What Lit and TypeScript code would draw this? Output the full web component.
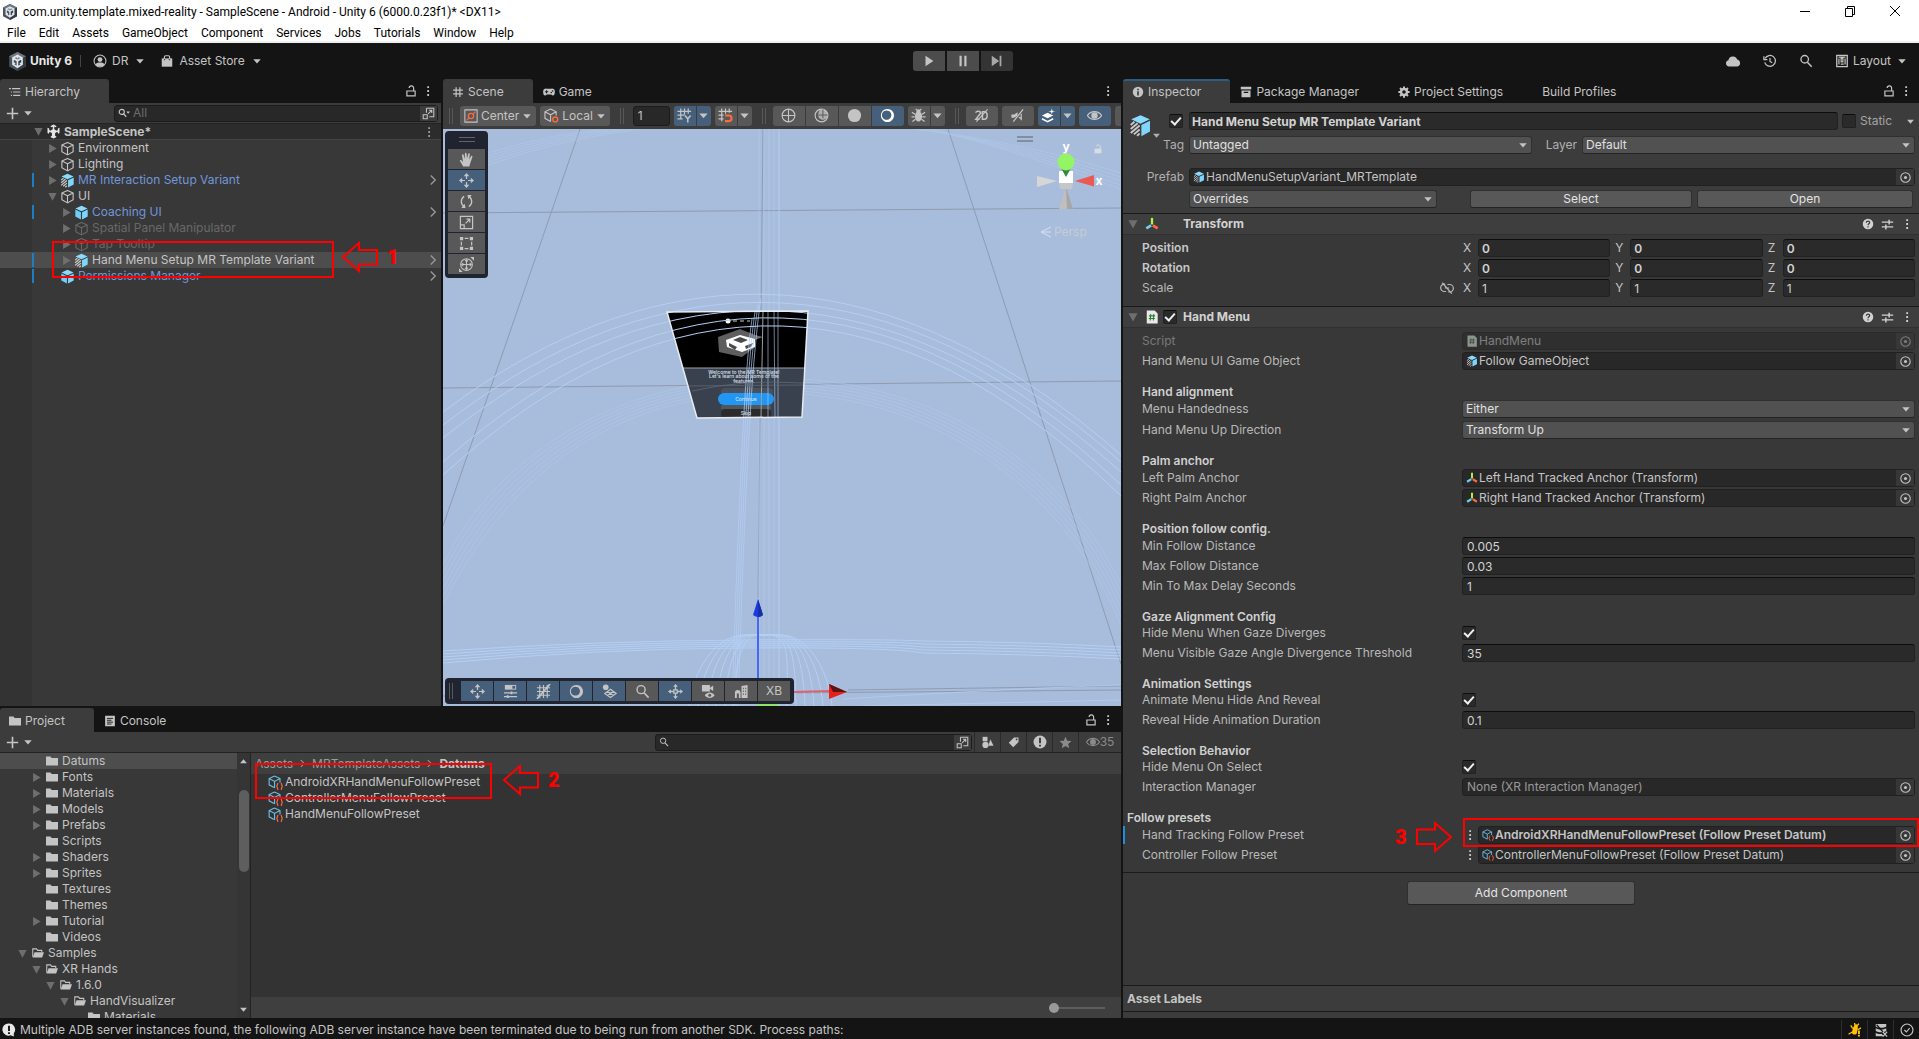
import { LitElement, html, svg, css, nothing, TemplateResult, SVGTemplateResult } from "lit";
import { customElement } from "lit/decorators.js";
import { classMap } from "lit/directives/class-map.js";
import { styleMap } from "lit/directives/style-map.js";

const cubeOutline = svg`<path d="M8 1.5 14 4.3V11.5L8 14.8 2 11.5V4.3ZM2 4.3 8 7.3 14 4.3M8 7.3V14.8" fill="none" stroke="currentColor" stroke-width="1.2" stroke-linejoin="round"/>`;
const cubeBlue = svg`<path d="M8 .8 14.4 3.7 8 6.7 1.6 3.7Z" fill="#8adcff"/><path d="M1.4 4.7 7.4 7.6V15.4L1.4 12.2Z" fill="#6fcdf8"/><path d="M14.6 4.7 8.6 7.6V15.4L14.6 12.2Z" fill="#7fd6fd"/>`;
const cubeVariant = svg`<path d="M8 .8 14.4 3.7 8 6.7 1.6 3.7Z" fill="#8adcff"/><path d="M14.6 4.7 8.6 7.6V15.4L14.6 12.2Z" fill="#7fd6fd"/><path d="M1.2 7.6 3.8 5.4M1.2 10.4 6 6.4M1.2 13.2 7.4 8M3.4 14.2 7.4 10.8M5.6 15.2 7.4 13.6" stroke="#c8c8c8" stroke-width="1.3" fill="none"/>`;
const hash = svg`<path d="M5.5 1.5V14.5M10.5 1.5V14.5M1.5 5.5H14.5M1.5 10.5H14.5" stroke="currentColor" stroke-width="1.6" fill="none"/>`;
const cross4 = svg`<path d="M8 0 11 3.4H5ZM8 16 11 12.6H5ZM0 8 3.4 5V11ZM16 8 12.6 5V11Z" fill="currentColor"/><path d="M8 3V6.4M8 9.6V13M3 8H6.4M9.6 8H13" stroke="currentColor" stroke-width="1.3"/>`;
const unityMark = (c: string) => svg`<path d="M8 .6 11.4 2.5 10 3.4 8.8 2.7V5.6L11.4 7.1 12.6 6.4V4.8L14.4 3.9V9.6L13 10.4 12.2 8.2 9.7 9.6V12.5L11 13.2V14.2L8 15.4 5 14.2V13.2L6.3 12.5V9.6L3.8 8.2 3 10.4 1.6 9.6V3.9L3.4 4.8V6.4L4.6 7.1 7.2 5.6V2.7L6 3.4 4.6 2.5Z" fill="${c}"/>`;

const ICONS: Record<string, SVGTemplateResult> = {
  unity: svg`<path d="M8 0 15 3.6V12.2L8 16 1 12.2V3.6Z" fill="#4b545e"/><path d="M8 0 15 3.6 8 7.8 1 3.6Z" fill="#6d7782"/><path d="M8 7.8 15 3.6V12.2L8 16Z" fill="#323a43"/><path d="M8 3 11.8 5V10.4L8 12.8 4.2 10.4V5ZM4.2 5 8 7.4 11.8 5M8 7.4V12.8M8 3V5.2M4.2 10.4 6 9.4M11.8 10.4 10 9.4" fill="none" stroke="#e2e6ea" stroke-width="1.4"/>`,
  scene: unityMark("#e6e6e6"),
  person: svg`<circle cx="8" cy="8" r="6.8" fill="none" stroke="currentColor" stroke-width="1.2"/><circle cx="8" cy="6.4" r="2.8" fill="currentColor"/><path d="M3 12C4 9.900 6 9.800 8 9.800S12 9.900 13 12C11.800 13.800 10 14.400 8 14.400S4.200 13.800 3 12Z" fill="currentColor"/>`,
  bag: svg`<path d="M2 5H14V14.500H2Z" fill="currentColor"/><path d="M5 7V3.600A1.500 1.500 0 0 1 6.500 2H9.500A1.500 1.500 0 0 1 11 3.600V7" fill="none" stroke="currentColor" stroke-width="1.3"/><path d="M4.500 6.500H6M10 6.500H11.500" stroke="#141414"/>`,
  down: svg`<path d="M2 5H14L8 12Z" fill="currentColor"/>`,
  right: svg`<path d="M3 1.500 14 8 3 14.500Z" fill="currentColor"/>`,
  open: svg`<path d="M2 3H14L8 14Z" fill="currentColor"/>`,
  play: svg`<path d="M4 2 13 8 4 14Z" fill="currentColor"/>`,
  pause: svg`<path d="M4 2H6.500V14H4ZM9.500 2H12V14H9.500Z" fill="currentColor"/>`,
  step: svg`<path d="M2 2 10.500 8 2 14ZM11 2H13V14H11Z" fill="currentColor"/>`,
  cloud: svg`<path d="M4 13.500A3.200 3.200 0 0 1 3.400 7.200 4.600 4.600 0 0 1 12.200 6.500 3.600 3.600 0 0 1 12.400 13.500Z" fill="currentColor"/>`,
  history: svg`<path d="M2.400 5.200A6.200 6.200 0 1 1 2 9.500" fill="none" stroke="currentColor" stroke-width="1.4"/><path d="M1 2.500V6.500H5" fill="none" stroke="currentColor" stroke-width="1.4"/><path d="M8 4.500V8.500L10.500 10" fill="none" stroke="currentColor" stroke-width="1.4"/>`,
  search: svg`<circle cx="6.500" cy="6" r="4.300" fill="none" stroke="currentColor" stroke-width="1.500"/><path d="M9.600 9.300 14.500 14.500" stroke="currentColor" stroke-width="1.700"/>`,
  searchDrop: svg`<circle cx="5" cy="6.500" r="3.400" fill="none" stroke="currentColor" stroke-width="1.500"/><path d="M7.400 9 11 13" stroke="currentColor" stroke-width="1.600"/><path d="M11 6H16L13.500 9Z" fill="currentColor"/>`,
  layout: svg`<path d="M2 1.500H14V14.500H2Z" fill="none" stroke="currentColor" stroke-width="1.500"/><path d="M4.500 5V12M7 5V9H9V5ZM11.500 5V12M6.500 11.500H10M4 3.500H12" fill="none" stroke="currentColor" stroke-width="1.400"/>`,
  list: svg`<path d="M4 3.500H15M5.500 8H15M5.500 12.500H15" stroke="currentColor" stroke-width="1.500"/><path d="M0 3.500H2.500M2.500 8H4M2.500 12.500H4" stroke="currentColor" stroke-width="1.500"/>`,
  hash,
  gamepad: svg`<path d="M4.500 3.500H11.500A4.300 4.300 0 0 1 15.800 8C15.800 13.500 12.500 13.500 11 11.200H5C3.500 13.500 .2 13.500 .2 8A4.300 4.300 0 0 1 4.500 3.500Z" fill="currentColor"/><path d="M4.800 5.500V9.900M2.600 7.700H7" stroke="#141414" stroke-width="1.200"/><circle cx="11" cy="8.600" r="1" fill="#141414"/><circle cx="12.800" cy="6.600" r="1" fill="#141414"/>`,
  info: svg`<circle cx="8" cy="8" r="7" fill="currentColor"/><path d="M8 3.500V5.500M8 7V12.500" stroke="#2c2c2c" stroke-width="2"/>`,
  pkg: svg`<path d="M1 1H15V4.500H1Z" fill="currentColor"/><path d="M2 6H14V15H2Z" fill="currentColor"/><path d="M5 8.500H11" stroke="#141414" stroke-width="1.600"/>`,
  gear: svg`<circle cx="8" cy="8" r="4" fill="none" stroke="currentColor" stroke-width="3.200"/><path d="M8 .5V4M8 12V15.500M.5 8H4M12 8H15.500M2.700 2.700 5 5M11 11 13.300 13.300M13.300 2.700 11 5M5 11 2.700 13.300" stroke="currentColor" stroke-width="2.600"/>`,
  lock: svg`<path d="M2.500 8H13.500V14.500H2.500Z" fill="none" stroke="currentColor" stroke-width="1.600"/><path d="M11.500 8V4.500A2.800 2.800 0 0 0 5.500 4" fill="none" stroke="currentColor" stroke-width="1.600"/>`,
  lockSolid: svg`<path d="M2.500 7.500H13.500V15H2.500Z" fill="currentColor"/><path d="M11.500 8V4.500A2.800 2.800 0 0 0 5.500 4" fill="none" stroke="currentColor" stroke-width="1.600"/>`,
  kebab: svg`<path d="M7 1.500H9.400V4H7ZM7 6.800H9.400V9.300H7ZM7 12H9.400V14.500H7Z" fill="currentColor"/>`,
  plus: svg`<path d="M8 1V15M1 8H15" stroke="currentColor" stroke-width="2"/>`,
  popout: svg`<path d="M5.500 1.500H14.500V12H9M5.500 1.500V7" fill="none" stroke="currentColor" stroke-width="1.300"/><path d="M1.500 9.500H6.500V14.500H1.500Z" fill="none" stroke="currentColor" stroke-width="1.300"/><path d="M7.500 8.500 12 4M8.500 4H12V7.500" fill="none" stroke="currentColor" stroke-width="1.300"/>`,
  cubeOutline, cubeBlue, cubeVariant,
  chev: svg`<path d="M5 2 11 8 5 14" fill="none" stroke="currentColor" stroke-width="1.800"/>`,
  folder: svg`<path d="M0 2H6L7.500 4H16V14H0Z" fill="currentColor"/>`,
  folderOpen: svg`<path d="M1 13V2.500H6L7.500 4.500H13V7" fill="none" stroke="currentColor" stroke-width="1.400"/><path d="M3.500 7H16L13.500 14H0.800Z" fill="currentColor"/>`,
  console: svg`<path d="M1.500 1H14.500V15H1.500Z" fill="currentColor"/><path d="M4 4.500H12M4 7H10M4 9.500H12M4 12H10" stroke="#141414" stroke-width="1.200"/>`,
  datum: svg`<path d="M7 1 12.800 3.800V8M7 1 1.200 3.800V10.500L7 13.500M1.200 3.800 7 6.800 12.800 3.800M7 6.800V13.500" fill="none" stroke="#6cbde3" stroke-width="1.200"/><path d="M11 8.700C9.600 8.700 10.500 11.800 9 12.100 10.500 12.400 9.600 15.500 11 15.500M13.600 8.700C15 8.700 14.100 11.800 15.600 12.100 14.100 12.400 15 15.500 13.600 15.500" fill="none" stroke="#ff6b3d" stroke-width="1.300"/>`,
  center: svg`<path d="M1 1H15V15H1Z" fill="none" stroke="currentColor" stroke-width="1.200"/><circle cx="8" cy="8" r="3" fill="none" stroke="#ff6b3d" stroke-width="1.500"/><path d="M3 13 5.500 10.500M10.500 5.500 13 3" stroke="#ff6b3d" stroke-width="1.300"/>`,
  local: svg`<path d="M7 1 13 4V8M7 1 1 4V11L7 14.500M1 4 7 7.200 13 4M7 7.200V14.500" fill="none" stroke="currentColor" stroke-width="1.200"/><circle cx="12" cy="12.200" r="2.600" fill="none" stroke="#ff6b3d" stroke-width="1.500"/>`,
  gridY: svg`<path d="M4 .5V12M8 .5V7M12 .5V6M.5 3.500H15M.5 7.500H8M.5 11.500H6" stroke="currentColor" stroke-width="1.300"/><path d="M8.500 8 11.500 11.500 14.500 8M11.500 11.500V15.500" fill="none" stroke="currentColor" stroke-width="1.600"/>`,
  snap: svg`<path d="M4 .5V14M8 .5V6M12 .5V5M.5 3.500H15M.5 7.500H6M.5 11.500H6" stroke="currentColor" stroke-width="1.300"/><path d="M7.500 8H11.500A2.700 2.700 0 0 1 11.500 14H7.500" fill="none" stroke="#ff6b3d" stroke-width="2.200"/>`,
  globe: svg`<circle cx="8" cy="8" r="6.800" fill="none" stroke="currentColor" stroke-width="1.200"/><path d="M8 1V15M1 8H15" stroke="currentColor" stroke-width="1.200"/>`,
  shaded: svg`<circle cx="8" cy="8" r="6.800" fill="none" stroke="currentColor" stroke-width="1.200"/><path d="M6.500 1.200A6.800 6.800 0 0 1 14.500 9.500 5.500 5.500 0 0 1 5 10 10 10 0 0 1 6.500 1.200Z" fill="currentColor" opacity=".8"/><path d="M9.500 1.500V11M5 7.500H14.500" stroke="#585858"/>`,
  ball: svg`<circle cx="8" cy="8" r="7" fill="currentColor"/>`,
  moon: svg`<path d="M8 1A7 7 0 1 1 7.900 1ZM7 2.600A5 5 0 1 0 7.100 2.600Z" fill="#fff" fill-rule="evenodd"/>`,
  bug: svg`<ellipse cx="8" cy="9" rx="3.800" ry="5.500" fill="currentColor"/><circle cx="8" cy="3.600" r="2.200" fill="currentColor"/><path d="M5 1 6.500 2.500M11 1 9.500 2.500M1 4.500 4.500 7M15 4.500 11.500 7M.5 9.500H4M15.500 9.500H12M1.500 14.500 4.800 12M14.500 14.500 11.200 12" stroke="currentColor" stroke-width="1.300"/>`,
  twoD: svg`<path d="M2 5C2 3 7 3 7 5.500L2 12H6M9 4H11C15 4 15 12 11 12H9Z" fill="none" stroke="currentColor" stroke-width="1.600"/><path d="M14.500 1.500 2.500 14.500" stroke="currentColor" stroke-width="1.200"/>`,
  mute: svg`<path d="M1.500 7H4.500L8 4.500V8L4.500 10.500H1.500Z" fill="currentColor"/><path d="M14 1.500 3.500 14.500M12 6V12L9.500 9.500" fill="none" stroke="currentColor" stroke-width="1.300"/>`,
  fx: svg`<path d="M1 8 7 5 13 8 7 11Z" fill="#fff"/><path d="M1 11.500 7 14.500 13 11.500" fill="none" stroke="#fff" stroke-width="1.600"/><path d="M11.500 0 12.400 2.800 15.500 3.700 12.400 4.600 11.500 7.500 10.600 4.600 7.500 3.700 10.600 2.800Z" fill="#fff" stroke="#46607c" stroke-width=".5"/>`,
  eye: svg`<path d="M.5 8C4 2.500 12 2.500 15.500 8 12 13.500 4 13.500 .5 8Z" fill="none" stroke="currentColor" stroke-width="1.300"/><circle cx="8" cy="8" r="3.400" fill="currentColor"/>`,
  hand: svg`<path d="M4.500 15.500 1 9.500C.6 8.600 1.800 8 2.500 8.800L4.300 10.700 3.200 3.500C3 2.400 4.600 2.100 4.900 3.200L6.200 7.500 6.300 1.600C6.300.4 8 .4 8.100 1.600L8.500 7.300 9.800 2.100C10 1 11.600 1.300 11.500 2.500L10.900 8 12.800 4.500C13.300 3.600 14.700 4.100 14.300 5.200L11.800 12.500 11 15.500Z" fill="currentColor"/>`,
  cross4,
  rotate: svg`<path d="M5.500 13.500A6.500 6.500 0 0 1 5.500 2.500M10.500 2.500A6.500 6.500 0 0 1 10.500 13.500" fill="none" stroke="currentColor" stroke-width="1.400"/><path d="M9 1H13.500L10 5.500ZM7 15H2.500L6 10.500Z" fill="currentColor"/>`,
  scale: svg`<path d="M1.500 1.500H14.500V14.500H1.500ZM1.500 10.500H5.500V14.500" fill="none" stroke="currentColor" stroke-width="1.300"/><path d="M7 9 11.500 4.500M8 4.500H11.500V8" fill="none" stroke="currentColor" stroke-width="1.300"/>`,
  rect: svg`<path d="M1 1H4.500V4.500H1ZM11.500 1H15V4.500H11.500ZM1 11.500H4.500V15H1ZM11.500 11.500H15V15H11.500Z" fill="currentColor"/><path d="M6 2.500H10M6 13.500H10M2.500 6V10M13.500 6V10" stroke="currentColor" stroke-width="1.300"/>`,
  multi: svg`<circle cx="8" cy="8" r="6.200" fill="none" stroke="currentColor" stroke-width="1.200"/><path d="M8 3V13M3 8H13M6.500 4.500 8 3 9.500 4.500M6.500 11.500 8 13 9.500 11.500M4.500 6.500 3 8 4.500 9.500M11.500 6.500 13 8 11.500 9.500" fill="none" stroke="currentColor" stroke-width="1.200"/><path d="M12 0H16V4ZM0 12V16H4Z" fill="currentColor"/>`,
  panelSliders: svg`<path d="M2 1H14V6H2Z" fill="currentColor"/><path d="M10 2H13V5H10Z" fill="#46607c"/><path d="M1 9.500H15M1 13.500H15" stroke="currentColor" stroke-width="1.300"/><path d="M9 8V11M5 12V15" stroke="currentColor" stroke-width="2"/>`,
  gridSlash: svg`<path d="M4 1V15M8 1V15M12 1V15M1 4H15M1 8H15M1 12H15" stroke="currentColor" stroke-width="1.200"/><path d="M15 0 1 16" stroke="currentColor" stroke-width="1.800"/>`,
  lightProbe: svg`<path d="M8 1A7 7 0 1 1 7.900 1ZM6.800 2.800A4.800 4.800 0 1 0 6.900 2.800Z" fill="currentColor" fill-rule="evenodd"/>`,
  ballGrid: svg`<circle cx="4" cy="3.500" r="3" fill="currentColor"/><path d="M9 5.500 15 10 9 14.500 3 10ZM6 7.700 12 12.200M12 7.700 6 12.200" fill="none" stroke="currentColor" stroke-width="1.300"/>`,
  nav: svg`<path d="M8 0 10.500 3H5.500ZM8 16 10.500 13H5.500ZM0 8 3 5.500V10.500ZM16 8 13 5.500V10.500Z" fill="currentColor"/><path d="M8 2V6M8 10V14M2 8H6M10 8H14M6.200 6.200H9.800V9.800H6.200Z" fill="none" stroke="currentColor" stroke-width="1.400"/>`,
  camEye: svg`<path d="M1 1H9.500V8H1ZM9.500 4 13 1.500V7.500L9.500 5Z" fill="currentColor"/><path d="M4 12C7 8.200 11.500 8.200 14.500 12 11.500 15.800 7 15.800 4 12Z" fill="currentColor"/><circle cx="9.300" cy="12" r="1.600" fill="#585858"/>`,
  city: svg`<path d="M1 15V9C1 5.500 7 5.500 7 9V15H5.200V10H3V15ZM8 15V2L14.500 1V15Z" fill="currentColor"/><path d="M10 4V13M12.500 4V13" stroke="#585858" stroke-dasharray="1.500 1.500"/>`,
  help: svg`<circle cx="8" cy="8" r="7" fill="currentColor"/><path d="M5.800 6.200C5.800 3.400 10.400 3.600 10.200 6.200 10.100 7.800 8 7.800 8 9.600M8 11V12.800" fill="none" stroke="#3a3a3a" stroke-width="1.600"/>`,
  preset: svg`<path d="M1 5H15M1 11H15" stroke="currentColor" stroke-width="1.400"/><path d="M10 2V8M6 8V14" stroke="currentColor" stroke-width="1.800"/>`,
  transform: svg`<path d="M8 1V8.500" stroke="#b6f24a" stroke-width="2.600"/><path d="M7 9.500 1.500 13" stroke="#6fcdf8" stroke-width="3"/><path d="M9 9.500 14.500 13" stroke="#ff6b3d" stroke-width="3"/>`,
  script: svg`<path d="M2 .5H11L14.500 4V15.500H2Z" fill="#e9e9e9"/><path d="M6.500 4.500 6 12M10 4.500 9.500 12M4.500 6.700H11.500M4.300 9.700H11.300" stroke="#2e7d32" stroke-width="1.200"/>`,
  target: svg`<circle cx="8" cy="8" r="5.800" fill="none" stroke="currentColor" stroke-width="1.300"/><circle cx="8" cy="8" r="1.900" fill="currentColor"/>`,
  link: svg`<path d="M6 3.500H5A4 4 0 0 0 5 12H7M9.500 12.500H11A4 4 0 0 0 11 4H8.500M5.500 8H10.500M2.500 2 13.500 14.500" fill="none" stroke="currentColor" stroke-width="1.400"/>`,
  shapes: svg`<path d="M2 1H8V6.500H2Z" fill="currentColor"/><circle cx="5.500" cy="11" r="3.800" fill="currentColor"/><path d="M11.500 4 15.500 12H9Z" fill="currentColor"/>`,
  tag: svg`<path d="M8 2H14V8L7 15 1 9Z" fill="currentColor"/><circle cx="11.500" cy="4.500" r="1.200" fill="#3c3c3c"/>`,
  alert: svg`<circle cx="8" cy="8" r="7.400" fill="currentColor"/><path d="M8 3V9.500M8 11.200V13.200" stroke="#3c3c3c" stroke-width="2.200"/>`,
  star: svg`<path d="M8 1 10.100 5.900 15.400 6.300 11.300 9.800 12.600 15 8 12.200 3.400 15 4.700 9.800 .6 6.300 5.900 5.900Z" fill="currentColor"/>`,
  bubble: svg`<path d="M8 .5A7 7 0 0 1 13.500 11.800L13.500 15.500 10 14A7 7 0 1 1 8 .5Z" fill="#e8e8e8"/><path d="M8 3V9M8 10.500V12.500" stroke="#141414" stroke-width="2.200"/>`,
  bugWarn: svg`<g transform="rotate(14 8 8)"><path d="M5.200 6C5.200 3 10.800 3 10.800 6V11C10.800 14 5.200 14 5.200 11Z" fill="#ffc107"/><circle cx="8" cy="3.500" r="2.300" fill="#ffc107"/><path d="M5.500 0 6.500 2.500M10.500 0 9.500 2.500M2 4 5 7M14 4 11 7M2 14.500 5.500 11" stroke="#ffc107" stroke-width="1.500"/></g><path d="M12.500 8.500V12.500M12.500 13.500V15.500" stroke="#ffc107" stroke-width="2.200"/>`,
  layersOff: svg`<path d="M2 1H14V4C12 6 4 6 2 4ZM2 6C5 8 11 8 14 6V9C11 11 5 11 2 9ZM2 11C4 12.500 7 13 9 12.500L11 15H2Z" fill="currentColor"/><path d="M3 2 14.500 15" stroke="#141414" stroke-width="1.400"/><path d="M10 10 15 15.500M15 10 10 15.500" stroke="currentColor" stroke-width="1.300"/>`,
  okCircle: svg`<circle cx="8" cy="8" r="6.800" fill="none" stroke="currentColor" stroke-width="1.300"/><path d="M5 8 7.300 10.300 11 5.800" fill="none" stroke="currentColor" stroke-width="1.300"/>`,
  min: svg`<path d="M3 8.500H13" stroke="currentColor"/>`,
  restore: svg`<path d="M3.500 5.500H10.500V13.500H3.500ZM5.500 5.500V3.500H12.500V11.500H10.500" fill="none" stroke="currentColor"/>`,
  close: svg`<path d="M3 3 13 13M13 3 3 13" stroke="currentColor"/>`,
};

const icon = (name: string, size = 12, cls = "") =>
  html`<svg class="ic ${cls}" width=${size} height=${size} viewBox="0 0 16 16" aria-hidden="true">${ICONS[name]}</svg>`;

interface Node { t: string; d: number; a?: "open" | "right"; ic: string; k?: string; mod?: boolean; go?: boolean }

const HIERARCHY: Node[] = [
  { t: "Environment", d: 1, a: "right", ic: "cubeOutline" },
  { t: "Lighting", d: 1, a: "right", ic: "cubeOutline" },
  { t: "MR Interaction Setup Variant", d: 1, a: "right", ic: "cubeVariant", k: "prefab", mod: true, go: true },
  { t: "UI", d: 1, a: "open", ic: "cubeOutline" },
  { t: "Coaching UI", d: 2, a: "right", ic: "cubeBlue", k: "prefab", mod: true, go: true },
  { t: "Spatial Panel Manipulator", d: 2, a: "right", ic: "cubeOutline", k: "off" },
  { t: "Tap Tooltip", d: 2, a: "right", ic: "cubeOutline", k: "off" },
  { t: "Hand Menu Setup MR Template Variant", d: 2, a: "right", ic: "cubeVariant", k: "picked", mod: true, go: true },
  { t: "Permissions Manager", d: 1, ic: "cubeBlue", k: "prefab", mod: true, go: true },
];

const FOLDERS: Node[] = [
  { t: "Datums", d: 1, ic: "folder", k: "picked" },
  { t: "Fonts", d: 1, a: "right", ic: "folder" },
  { t: "Materials", d: 1, a: "right", ic: "folder" },
  { t: "Models", d: 1, a: "right", ic: "folder" },
  { t: "Prefabs", d: 1, a: "right", ic: "folder" },
  { t: "Scripts", d: 1, ic: "folder" },
  { t: "Shaders", d: 1, a: "right", ic: "folder" },
  { t: "Sprites", d: 1, a: "right", ic: "folder" },
  { t: "Textures", d: 1, ic: "folder" },
  { t: "Themes", d: 1, ic: "folder" },
  { t: "Tutorial", d: 1, a: "right", ic: "folder" },
  { t: "Videos", d: 1, ic: "folder" },
  { t: "Samples", d: 0, a: "open", ic: "folderOpen" },
  { t: "XR Hands", d: 1, a: "open", ic: "folderOpen" },
  { t: "1.6.0", d: 2, a: "open", ic: "folderOpen" },
  { t: "HandVisualizer", d: 3, a: "open", ic: "folderOpen" },
  { t: "Materials", d: 4, ic: "folder" },
];

type Prop =
  | { kind: "head"; t: string; out?: boolean }
  | { kind: "obj"; t: string; v: string; ic?: string; off?: boolean; none?: boolean; mod?: boolean; menu?: boolean }
  | { kind: "sel"; t: string; v: string }
  | { kind: "num"; t: string; v: string }
  | { kind: "chk"; t: string };

const PROPS: Prop[] = [
  { kind: "obj", t: "Script", v: "HandMenu", ic: "script", off: true },
  { kind: "obj", t: "Hand Menu UI Game Object", v: "Follow GameObject", ic: "cubeVariant" },
  { kind: "head", t: "Hand alignment" },
  { kind: "sel", t: "Menu Handedness", v: "Either" },
  { kind: "sel", t: "Hand Menu Up Direction", v: "Transform Up" },
  { kind: "head", t: "Palm anchor" },
  { kind: "obj", t: "Left Palm Anchor", v: "Left Hand Tracked Anchor (Transform)", ic: "transform" },
  { kind: "obj", t: "Right Palm Anchor", v: "Right Hand Tracked Anchor (Transform)", ic: "transform" },
  { kind: "head", t: "Position follow config." },
  { kind: "num", t: "Min Follow Distance", v: "0.005" },
  { kind: "num", t: "Max Follow Distance", v: "0.03" },
  { kind: "num", t: "Min To Max Delay Seconds", v: "1" },
  { kind: "head", t: "Gaze Alignment Config" },
  { kind: "chk", t: "Hide Menu When Gaze Diverges" },
  { kind: "num", t: "Menu Visible Gaze Angle Divergence Threshold", v: "35" },
  { kind: "head", t: "Animation Settings" },
  { kind: "chk", t: "Animate Menu Hide And Reveal" },
  { kind: "num", t: "Reveal Hide Animation Duration", v: "0.1" },
  { kind: "head", t: "Selection Behavior" },
  { kind: "chk", t: "Hide Menu On Select" },
  { kind: "obj", t: "Interaction Manager", v: "None (XR Interaction Manager)", none: true },
  { kind: "head", t: "Follow presets", out: true },
  { kind: "obj", t: "Hand Tracking Follow Preset", v: "AndroidXRHandMenuFollowPreset (Follow Preset Datum)", ic: "datum", mod: true, menu: true },
  { kind: "obj", t: "Controller Follow Preset", v: "ControllerMenuFollowPreset (Follow Preset Datum)", ic: "datum", menu: true },
];

@customElement("app-root")
export class AppRoot extends LitElement {
  static styles = css`
    :host { display: block; height: 100vh; font: 12px/16px Inter, "Liberation Sans", sans-serif; color: #c4c4c4; }
    * { box-sizing: border-box; }
    .ic { flex: none; display: block; }
    button, input, select { font: inherit; color: inherit; margin: 0; padding: 0; border: 0; background: none; border-radius: 0; outline: none; min-width: 0; }
    button { display: flex; align-items: center; justify-content: center; }
    a { color: inherit; text-decoration: none; }
    .app { display: flex; flex-direction: column; height: 100%; background: #141414; overflow: hidden; }
    .os { background: #fff; color: #000; font-family: Roboto, "Noto Sans", sans-serif; border-bottom: 2px solid #f0f0f0; }
    .title { display: flex; align-items: center; height: 24px; padding: 0 16px 0 2px; gap: 5px; }
    .title .name { flex: 1; }
    .wins { display: flex; gap: 29px; padding-bottom: 3px; }
    .menu { display: flex; height: 17px; padding: 1px 7px 0; gap: 13px; }
    .top { display: grid; grid-template-columns: 1fr auto 1fr; align-items: center; height: 36px; flex: none; padding: 0 12px 0 8px; }
    .row { display: flex; align-items: center; }
    .brand { font-weight: 700; color: #e8e8e8; margin: 0 8px 0 3px; }
    .account { margin-left: 12px; padding-left: 0; gap: 5px; }
    .sep { width: 1px; height: 12px; background: #444; }
    .store { margin-left: 15px; gap: 5px; }
    .drop { margin-left: 2px; }
    .plays { display: flex; gap: 2px; margin-left: 10px; }
    .plays button { width: 32px; height: 20px; background: #4c4c4c; }
    .plays button:first-child { border-radius: 3px 0 0 3px; }
    .plays button:last-child { border-radius: 0 3px 3px 0; background: #343434; color: #a8a8a8; }
    .tools { justify-content: flex-end; gap: 22px; }
    .tools .lay { gap: 4px; }
    .main { flex: 1; min-height: 0; display: grid; grid-template-columns: minmax(0, 1121fr) minmax(0, 796fr); gap: 2px; }
    .left { display: grid; min-height: 0; grid-template-rows: minmax(0, 627fr) minmax(0, 310fr); gap: 2px; }
    .upper { display: grid; min-height: 0; grid-template-columns: minmax(0, 441fr) minmax(0, 678fr); gap: 2px; }
    .panel { display: flex; flex-direction: column; min-height: 0; min-width: 0; position: relative; }
    .tabs { display: flex; height: 24px; flex: none; gap: 1px; }
    .tab { padding: 0 29px 0 9px; gap: 4px; border-radius: 3px 3px 0 0; border-top: 2px solid transparent; white-space: nowrap; }
    .tab.on { background: #3c3c3c; }
    .tab.focus { border-top-color: #2c5d87; }
    .tabEnd { margin-left: auto; display: flex; align-items: center; gap: 5px; padding-right: 7px; }
    .bar { display: flex; align-items: center; background: #3c3c3c; flex: none; }
    .hbar { height: 21px; border-bottom: 1px solid #232323; padding: 0 3px 0 6px; }
    .add { gap: 4px; }
    .search { display: flex; align-items: center; height: 17px; background: #282828; border: 1px solid #1c1c1c; border-radius: 3px; padding-left: 3px; gap: 3px; }
    .search input { flex: 1; height: 15px; }
    .search input::placeholder { color: #6e6e6e; opacity: 1; }
    .search button { width: 17px; height: 15px; background: #3c3c3c; }
    .hbar .search { margin-left: auto; width: 75%; }
    .hbody { flex: 1; min-height: 0; background: linear-gradient(90deg, #333 32px, #383838 32px); }
    .node { display: flex; align-items: center; height: 16px; position: relative; white-space: nowrap; }
    .node .arrow { width: 16px; display: flex; justify-content: center; color: #6e6e6e; flex: none; }
    .node .label { margin-left: 3px; }
    .node .go { margin-left: auto; margin-right: 2px; color: #999; }
    .node.prefab { color: #7196d8; }
    .node.off { color: #686868; }
    .node.picked { background: #4d4d4d; }
    .node.mod::before { content: ""; position: absolute; left: 32px; top: 1px; width: 2px; height: 14px; background: #1c7fc4; }
    .sceneRow { background: #2c2c2c; border-bottom: 1px solid #444; font-weight: 700; padding-left: 30px; padding-right: 4px; }
    .sbar { height: 26px; padding: 0 0 1px 6px; overflow: hidden; }
    .grip { width: 4px; height: 16px; border: 1px solid #585858; border-width: 0 1px; flex: none; }
    .tb { height: 20px; background: #585858; border-radius: 3px; flex: none; }
    .tb.w33 { width: 32px; }
    .tb.w23 { width: 22px; }
    .tb.w14 { width: 14px; }
    .tb.blue { background: #46607c; }
    .grp { display: flex; gap: 1px; margin-left: 4px; }
    .grp .tb { border-radius: 0; }
    .grp .tb:first-child { border-radius: 3px 0 0 3px; }
    .grp .tb:last-child { border-radius: 0 3px 3px 0; }
    .grp .tb:only-child { border-radius: 3px; }
    .pivot { padding: 0 4px; gap: 3px; margin-left: 4px; }
    .grip + .pivot, .grip + .grp { margin-left: 7px; }
    .gripGap { margin-left: 10px; }
    .snapv { width: 37px; height: 20px; background: #282828; border: 1px solid #1c1c1c; border-radius: 3px; padding-left: 4px; margin-left: 9px; flex: none; }
    .view { flex: 1; min-height: 0; position: relative; background: #a8bcdb; overflow: hidden; }
    .draw { display: block; width: 100%; height: 100%; }
    .vtools { position: absolute; left: 2px; top: 2px; width: 43px; background: #202430; border-radius: 4px; padding: 0 3px 4px; display: flex; flex-direction: column; gap: 1px; align-items: stretch; }
    .vgrip { width: 16px; height: 5px; border: 1px solid #626262; border-width: 1px 0; margin: 6px auto; }
    .vtools .tb, .htools .tb { border-radius: 0; }
    .htools { position: absolute; left: 2px; bottom: 2px; height: 26px; background: #202430; border-radius: 4px; padding: 0 4px 0 4px; display: flex; align-items: center; gap: 1px; }
    .htools .grip { margin-right: 7px; }
    .pbar { height: 21px; border-bottom: 1px solid #232323; padding-left: 6px; }
    .pbar .search { margin-left: auto; width: 317px; }
    .pf { width: 26px; height: 20px; border-left: 1px solid #2a2a2a; }
    .pf:first-of-type { margin-left: 2px; }
    .dim { color: #8a8a8a; }
    .count { width: 43px; }
    .pbody { flex: 1; min-height: 0; display: grid; grid-template-columns: 251fr 870fr; }
    .folders { display: flex; background: #383838; min-height: 0; overflow: hidden; border-right: 1px solid #232323; }
    .ftree { flex: 1; overflow: hidden; }
    .ftree .arrow { margin-right: 2px; }
    .ftree .label { margin-left: 4px; }
    .sb { width: 13px; background: #353535; display: flex; flex-direction: column; align-items: center; padding: 4px 0; }
    .thumb { width: 10px; height: 32%; border-radius: 5px; background: #5e5e5e; margin-top: 24px; }
    .sb .ic:last-child { margin-top: auto; }
    .flip { transform: rotate(180deg); }
    .assets { display: flex; flex-direction: column; background: #333; min-width: 0; }
    .crumbs { display: flex; gap: 5px; align-items: center; height: 21px; background: #3f3f3f; padding-left: 4px; color: #9a9a9a; }
    .crumbs b { color: #c4c4c4; }
    .asset { display: flex; align-items: center; height: 16px; padding-left: 17px; gap: 2px; }
    .zoom { margin-top: auto; height: 21px; background: #3f3f3f; display: flex; justify-content: flex-end; align-items: center; padding-right: 16px; }
    .zoom input { appearance: none; width: 56px; height: 12px; }
    .zoom input::-webkit-slider-runnable-track { height: 2px; background: #5e5e5e; }
    .zoom input::-webkit-slider-thumb { appearance: none; width: 10px; height: 10px; margin-top: -4px; border-radius: 50%; background: #999; }
    .status { height: 21px; flex: none; display: flex; align-items: center; padding: 2px 0 0 2px; gap: 4px; }
    .status .st { width: 26px; height: 19px; border-left: 1px solid #2e2e2e; }
    .status .end { margin-left: auto; display: flex; }
    .insp { background: #383838; flex: 1; min-height: 0; position: relative; display: flex; flex-direction: column; }
    .field { height: 18px; width: 100%; background: #2a2a2a; border: 1px solid #212121; border-top-color: #0d0d0d; border-radius: 3px; padding-left: 4px; color: #d2d2d2; }
    .sel { display: grid; align-items: center; height: 18px; }
    .sel > * { grid-area: 1 / 1; }
    .sel select { appearance: none; height: 18px; width: 100%; background: #515151; border: 1px solid #303030; border-bottom-color: #242424; border-radius: 3px; padding-left: 3px; color: #e0e0e0; }
    .sel .ic { justify-self: end; margin-right: 4px; pointer-events: none; }
    .btn { height: 18px; background: #585858; border: 1px solid #303030; border-bottom-color: #242424; border-radius: 3px; color: #e4e4e4; }
    .chk { appearance: none; display: grid; place-items: center; width: 14px; height: 14px; background: #2a2a2a; border: 1px solid #212121; border-top-color: #0d0d0d; border-radius: 2px; flex: none; }
    .chk:checked::before { content: ""; width: 4px; height: 8px; border: solid #f0f0f0; border-width: 0 2px 2px 0; transform: rotate(42deg); margin-bottom: 2px; }
    .head { background: #3c3c3c; display: grid; grid-template-columns: 66px minmax(0, 1fr); padding: 9px 4px 5px 0; border-bottom: 1px solid #1a1a1a; }
    .head .cellL { display: flex; justify-content: flex-end; padding-right: 5px; align-items: center; height: 18px; color: #b0b0b0; }
    .head .who { justify-content: flex-start; padding-left: 6px; align-items: flex-start; padding-top: 2px; }
    .who .menuArrow { margin: 17px 8px 0 0; }
    .nameRow { display: flex; align-items: center; gap: 4px; }
    .nameRow .field { font-weight: 700; flex: 1; padding-left: 2px; }
    .static { width: 42px; color: #a4a4a4; }
    .tagRow { display: grid; grid-template-columns: 343fr 50px 333fr; margin-top: 6px; }
    .tagRow label { text-align: right; padding-right: 5px; line-height: 18px; color: #b0b0b0; }
    .gap6 { margin-top: 6px; }
    .gap14 { margin-top: 14px; }
    .ovRow { display: grid; grid-template-columns: 248fr 250fr 216fr; column-gap: 5px; margin-top: 4px; padding-right: 2px; }
    .ovRow .first { margin-left: 28px; }
    .compHead { display: flex; align-items: center; height: 21px; background: #3e3e3e; border-bottom: 1px solid #303030; padding: 0 6px 0 4px; color: #d2d2d2; }
    .compHead .fold { color: #6e6e6e; margin-right: 6px; }
    .compHead .ttl { font-weight: 700; margin-left: 6px; }
    .compHead .end { margin-left: auto; display: flex; gap: 7px; align-items: center; }
    .blank { width: 14px; height: 14px; margin-left: 4px; }
    .compHead .chk { margin-left: 4px; }
    .tbody { padding: 4px 4px 7px 0; border-bottom: 1px solid #1a1a1a; }
    .prop { display: grid; grid-template-columns: minmax(0, 339fr) minmax(0, 453fr); align-items: center; height: 18px; margin-bottom: 2px; position: relative; }
    .prop > label, .prop > .pl { padding-left: 19px; color: #b8b8b8; white-space: nowrap; }
    .prop.strong > .pl { font-weight: 600; color: #c8c8c8; }
    .prop.selp { margin-bottom: 3px; }
    .prop.chkp { height: 16px; margin-bottom: 3px; }
    .prop.off { opacity: .5; }
    .prop.mod::before { content: ""; position: absolute; left: 0; top: 0; width: 2px; height: 18px; background: #1c8fe0; }
    .prop.mod .obj input { font-weight: 600; }
    .pl.lk { display: flex; justify-content: space-between; align-items: center; padding-right: 8px; }
    .vec { display: grid; grid-template-columns: repeat(3, auto minmax(0, 1fr)); align-items: center; }
    .vec label { width: 16px; padding-left: 1px; }
    .vec label ~ label { width: 20px; padding-left: 5px; }
    .vec .field { padding-left: 3px; }
    .strong .field { font-weight: 600; }
    .sec { height: 17px; margin: 13px 0 0 19px; font-weight: 600; color: #d0d0d0; line-height: 17px; }
    .sec.out { margin-left: 4px; }
    .props { padding: 4px 4px 6px 0; border-bottom: 1px solid #1a1a1a; }
    .objw { display: flex; align-items: center; }
    .objw .kb { width: 16px; height: 18px; flex: none; }
    .obj { flex: 1; display: flex; align-items: center; height: 18px; background: #282828; border: 1px solid #202020; border-radius: 3px; padding-left: 3px; gap: 1px; min-width: 0; }
    .obj input { flex: 1; height: 16px; }
    .obj.none { padding-left: 4px; color: #9a9a9a; }
    .obj button { width: 18px; height: 16px; background: #373737; color: #c4c4c4; flex: none; }
    .addc { width: 228px; height: 24px; margin: 8px auto 0; }
    .labels { margin-top: auto; border-top: 1px solid #1a1a1a; background: #3c3c3c; height: 33px; }
    .labels h2 { margin: 0; font-size: 12px; font-weight: 700; line-height: 25px; height: 26px; padding-left: 4px; border-bottom: 1px solid #1a1a1a; }
    .mark { position: absolute; border: 2px solid #f00; pointer-events: none; z-index: 2; }
    .m1 { left: 52px; top: 162px; width: 282px; height: 37px; }
    .m2 { left: 255px; top: 55px; width: 237px; height: 36px; }
    .m3 { left: 340px; right: 0; top: 739px; height: 29px; }
    .ar { position: absolute; display: flex; align-items: center; gap: 9px; color: #f00; font: 900 20px/20px Roboto, sans-serif; z-index: 2; }
    .a1 { left: 341px; top: 162px; }
    .a2 { left: 502px; top: 56px; }
    .a3 { left: 272px; top: 742px; gap: 9px; }
  `;

  private tab(name: string, ic: string | null, on = false, focus = false) {
    return html`<button class=${classMap({ tab: true, on, focus })} role="tab">${ic ? icon(ic, 12) : nothing}${name}</button>`;
  }

  private tabEnd(lock = true) {
    return html`<div class="tabEnd">${lock ? html`<button aria-label="Lock">${icon("lock", 12)}</button>` : nothing}<button aria-label="More">${icon("kebab", 12)}</button></div>`;
  }

  private node(n: Node, base: number, size: number) {
    return html`<div class="node ${n.k ?? ""} ${n.mod ? "mod" : ""}" style=${styleMap({ paddingLeft: `${base + 14 * n.d}px` })}>
      <span class="arrow">${n.a ? icon(n.a, 11) : nothing}</span>${icon(n.ic, size)}<span class="label">${n.t}</span>
      ${n.go ? html`<span class="go">${icon("chev", 12)}</span>` : nothing}
    </div>`;
  }

  private select(id: string, v: string) {
    return html`<div class="sel"><select id=${id} aria-label=${v}><option>${v}</option></select>${icon("down", 10)}</div>`;
  }

  private object(id: string, p: { v: string; ic?: string; none?: boolean }) {
    return html`<div class="obj ${p.none ? "none" : ""}">${p.ic ? icon(p.ic, 12) : nothing}<input id=${id} readonly .value=${p.v}><button aria-label="Pick object">${icon("target", 13)}</button></div>`;
  }

  private arrowShape(flip = false) {
    return html`<svg class=${flip ? "flip" : ""} width="37" height="32" viewBox="0 0 37 32" aria-hidden="true"><path d="M2 16 18 2V9H36V23.500H18V30Z" fill="none" stroke="#f00" stroke-width="2"/></svg>`;
  }

  private hierarchy() {
    return html`<section class="panel">
      <div class="tabs">${this.tab("Hierarchy", "list", true)}${this.tabEnd()}</div>
      <div class="bar hbar">
        <button class="add" aria-label="Create">${icon("plus", 13)}${icon("down", 10)}</button>
        <div class="search">${icon("searchDrop", 12)}<input aria-label="Search hierarchy" placeholder="All"><button aria-label="Open search">${icon("popout", 13)}</button></div>
      </div>
      <div class="hbody">
        <div class="node sceneRow"><span class="arrow">${icon("open", 11)}</span>${icon("scene", 15)}<span class="label">SampleScene*</span><span class="go">${icon("kebab", 12)}</span></div>
        ${HIERARCHY.map((n) => this.node(n, 30, 15))}
      </div>
      <div class="mark m1"></div>
      <div class="ar a1">${this.arrowShape()}<span>1</span></div>
    </section>`;
  }

  private sceneDrawing(): TemplateResult {
    const range = (n: number) => Array.from({ length: n }, (_, i) => i);
    const big = [[283, 166, 326], [296, 174, 333], [309, 182, 343], [333, 189, 356], [346, 197, 367]];
    return html`<svg class="draw" viewBox="0 0 678 577" preserveAspectRatio="xMidYMin slice" role="img" aria-label="Scene view">
      <g fill="none" stroke="#8f9bb0" stroke-width="1">
        <path d="M137 0 0 397M505 0 678 535M320 0 315 469M0 84 678 79M0 259 678 252M405 561 678 557M0 567 678 561" />
      </g>
      <g fill="none" stroke="#b4cdf0" stroke-width="1" opacity=".5">
        ${range(5).map((i) => svg`<path d="M45 ${24 + i * 3}Q110 ${4 + i * 2} ${165 + i * 8} 0M${470 + i * 5} 0Q580 ${12 + i * 3} 678 ${44 + i * 4}"/>`)}
        ${range(6).map((i) => svg`<path d="M0 ${436 + i * 8}C${50 + i * 3} ${330 + i * 3} 170 ${250 + i * 3} 327 ${249 + i * 3}S620 ${330 + i * 5} 678 ${456 + i * 8}"/>`)}
      </g>
      <g fill="none" stroke="#b4d0f6" stroke-width="1">
        ${range(5).map((i) => svg`<path d="M0 ${522 + i * 3}Q150 ${512 + i * 2} 300 ${511 + i * 2}T480 ${512 + i * 3}Q590 ${513 + i * 3} 678 ${518 + i * 3}"/>`)}
        ${range(6).map((i) => svg`<path d="M${246 + i * 9} 577C${252 + i * 8} 530 ${280 + i * 4} 506 ${300 + i * 3} 506H${340 - i * 3}C${358 - i * 2} 506 ${384 - i * 8} 530 ${389 - i * 9} 577"/>`)}
        ${range(5).map((i) => svg`<path d="M${316 + i * 5} 0V577" opacity="${i === 4 ? 0.9 : 0.5}"/>`)}
        <path d="M400 570Q560 560 678 556M420 577 678 571" opacity=".7"/>
      </g>
      <path d="M224 183 365 182 359 288 254 289Z" fill="#000"/>
      <path d="M240 239H361L359 288 254 289Z" fill="#39414f"/>
      <path d="M275 208 297 200 312 206V218L299 228 276 223Z" fill="#5e5e5e"/>
      <path d="M312 206 320 208 312 211Z" fill="#6a6a6a"/>
      <path d="M283 211 297 206 312 210V218L299 223 284 218Z" fill="#fff"/>
      <path d="M290 211 297 208 305 211 298 214ZM286 214 294 218 292 221 286 217ZM302 217 310 214 308 218 303 220Z" fill="#4b4b4b"/>
      <circle cx="285" cy="192" r="2.500" fill="#fff"/>
      <path d="M290 192H294M297 192H301M304 192H307" stroke="#666" stroke-width="2"/>
      <rect x="278" y="259" width="52" height="8" rx="4" fill="#4b515c"/>
      <rect x="275" y="264" width="56" height="12" rx="6" fill="#2196f3"/>
      <rect x="278" y="276" width="50" height="5" rx="2" fill="#50555e"/>
      <rect x="278" y="280" width="50" height="9" rx="4" fill="#2b2b2b"/>
      <g fill="#dfe3ea" font-family="Inter, sans-serif" font-size="5" font-weight="500" text-anchor="middle">
        <text x="301" y="245">Welcome to the MR Template!</text>
        <text x="301" y="249">Let's learn about some of the</text>
        <text x="301" y="254">features.</text>
        <text x="303" y="272">Continue</text>
        <text x="303" y="286">Skip</text>
      </g>
      <g fill="none" stroke="#b4d0f6" stroke-width="1">
        ${big.map(([l, p, r]) => svg`<path d="M0 ${l}Q339 ${2 * p - (l + r) / 2} 678 ${r}"/>`)}
        ${range(4).map((i) => svg`<path d="M${309 + i * 3} ${190 - i * 7}C${303 + i * 2} 230 ${297 + i * 2} 330 ${289 + i * 2} 577" opacity=".7"/>`)}
        <path d="M325 183V289M331 183 332 289M335 183V289" opacity=".6"/>
      </g>
      <path d="M320 183 318 289M240 239H361" stroke="#9aa0a8" fill="none"/>
      <path d="M245 257 360 256M249 262Q300 250 360 254" stroke="#5f6874" fill="none" opacity=".8"/>
      <path d="M224 183 365 182 359 288 254 289Z" fill="none" stroke="#e8ecf2" stroke-width="1.500"/>
      <path d="M315 486V577" stroke="#4668f5" stroke-width="2"/>
      <path d="M315 470 320 486Q315 490 310 486Z" fill="#1a3be0"/><path d="M315 470 320 486Q318 488 315 488Z" fill="#1730a8"/>
      <path d="M314 576H335" stroke="#8be36a" stroke-width="3"/>
      <path d="M350 563 388 562" stroke="#e06070" stroke-width="2"/>
      <path d="M386 555 404 563 386 570Z" fill="#e8201c"/><path d="M386 555 404 563H390Z" fill="#5a1512"/>
      <path d="M574 8H590M574 12H590" stroke="#5b6068"/>
      <path d="M594 47 614 52 594 58Z" fill="#d4d6da"/>
      <path d="M651 46 632 52 651 57.500Z" fill="#ea5a52"/>
      <path d="M616 80 623 58 630 80Z" fill="#c0bfbe"/><path d="M623 58 630 80H624Z" fill="#a6a6a8"/>
      <path d="M616 42H630V54H616Z" fill="#fff"/><path d="M616 54H630L629 60H617Z" fill="#c4c6ca"/>
      <path d="M618 39H628L623 48Z" fill="#2f8a3c"/>
      <circle cx="623" cy="33" r="8.500" fill="#93f566"/>
      <g fill="#fff" font-family="Inter, sans-serif" font-weight="700" font-size="12" text-anchor="middle">
        <text x="623" y="22">y</text><text x="656" y="56">x</text>
      </g>
      <g color="#d8dde4"><svg x="650" y="15" width="10" height="10" viewBox="0 0 16 16">${ICONS.lockSolid}</svg></g>
      <path d="M608 98 598 103 608 108M598 103H608" fill="none" stroke="#d6e2f2"/>
      <text x="611" y="107" fill="#c6ccd4" font-family="Inter, sans-serif" font-size="12">Persp</text>
    </svg>`;
  }

  private scene() {
    const side = ["hand", "cross4", "rotate", "scale", "rect", "multi"];
    const bottom: [string, boolean][] = [["cross4", true], ["panelSliders", true], ["gridSlash", true], ["lightProbe", true], ["ballGrid", true], ["search", false], ["nav", true], ["camEye", false], ["city", false]];
    const b = (ic: string, w: string, blue = false) => html`<button class="tb ${w} ${blue ? "blue" : ""}" aria-label=${ic}>${icon(ic, w === "w14" ? 11 : 15)}</button>`;
    return html`<section class="panel">
      <div class="tabs">${this.tab("Scene", "hash", true)}${this.tab("Game", "gamepad")}${this.tabEnd(false)}</div>
      <div class="bar sbar">
        <span class="grip"></span>
        <button class="tb pivot">${icon("center", 14)}Center${icon("down", 10)}</button>
        <button class="tb pivot">${icon("local", 15)}Local${icon("down", 10)}</button>
        <span class="grip gripGap"></span>
        <input class="snapv" aria-label="Snap size" value="1">
        <div class="grp">${b("gridY", "w23", true)}${b("down", "w14", true)}</div>
        <div class="grp">${b("snap", "w23")}${b("down", "w14")}</div>
        <span class="grip gripGap"></span>
        <div class="grp">${b("globe", "w33")}${b("shaded", "w33")}${b("ball", "w33")}${b("moon", "w33", true)}</div>
        <div class="grp">${b("bug", "w23")}${b("down", "w14")}</div>
        <span class="grip gripGap"></span>
        <div class="grp">${b("twoD", "w33")}</div>
        <div class="grp">${b("mute", "w33")}</div>
        <div class="grp">${b("fx", "w23", true)}${b("down", "w14", true)}</div>
        <div class="grp">${b("eye", "w33", true)}</div>
        <div class="grp">${b("list", "w33")}</div>
      </div>
      <div class="view">
        ${this.sceneDrawing()}
        <div class="vtools"><span class="vgrip"></span>${side.map((s, i) => b(s, "", i === 1))}</div>
        <div class="htools"><span class="grip"></span>${bottom.map(([s, on]) => b(s, "w33", on))}<button class="tb w33">XB</button></div>
      </div>
    </section>`;
  }

  private project() {
    return html`<section class="panel">
      <div class="tabs">${this.tab("Project", "folder", true)}${this.tab("Console", "console")}${this.tabEnd()}</div>
      <div class="bar pbar">
        <button class="add" aria-label="Create asset">${icon("plus", 13)}${icon("down", 10)}</button>
        <div class="search">${icon("search", 10)}<input aria-label="Search project"><button aria-label="Open search">${icon("popout", 13)}</button></div>
        <div class="row">
          <button class="pf" aria-label="Filter by type">${icon("shapes", 13)}</button>
          <button class="pf" aria-label="Filter by label">${icon("tag", 12)}</button>
          <button class="pf" aria-label="Filter by log">${icon("alert", 14)}</button>
          <button class="pf dim" aria-label="Favorites">${icon("star", 13)}</button>
          <button class="pf count dim">${icon("eye", 14)}35</button>
        </div>
      </div>
      <div class="pbody">
        <div class="folders">
          <div class="ftree">${FOLDERS.map((n) => this.node(n, 14, 12))}</div>
          <div class="sb">${icon("down", 9, "flip")}<div class="thumb"></div>${icon("down", 9)}</div>
        </div>
        <div class="assets">
          <nav class="crumbs"><a href="#assets">Assets</a>${icon("chev", 9)}<a href="#mr">MRTemplateAssets</a>${icon("chev", 9)}<b>Datums</b></nav>
          ${["AndroidXRHandMenuFollowPreset", "ControllerMenuFollowPreset", "HandMenuFollowPreset"].map((t) => html`<div class="asset">${icon("datum", 15)}${t}</div>`)}
          <div class="zoom"><input type="range" min="0" max="100" value="0" aria-label="Icon size"></div>
        </div>
      </div>
      <div class="mark m2"></div>
      <div class="ar a2">${this.arrowShape()}<span>2</span></div>
    </section>`;
  }

  private prop(p: Prop, i: number) {
    const id = `p${i}`;
    switch (p.kind) {
      case "head": return html`<div class="sec ${p.out ? "out" : ""}">${p.t}</div>`;
      case "sel": return html`<div class="prop selp"><label for=${id}>${p.t}</label>${this.select(id, p.v)}</div>`;
      case "num": return html`<div class="prop"><label for=${id}>${p.t}</label><input class="field" id=${id} .value=${p.v}></div>`;
      case "chk": return html`<div class="prop chkp"><label for=${id}>${p.t}</label><input class="chk" type="checkbox" id=${id} checked></div>`;
      case "obj": return html`<div class=${classMap({ prop: true, off: !!p.off, mod: !!p.mod })}><label for=${id}>${p.t}</label>
        <div class="objw">${p.menu ? html`<button class="kb" aria-label="Options">${icon("kebab", 12)}</button>` : nothing}${this.object(id, p)}</div></div>`;
    }
  }

  private vec(name: string, v: string, strong: boolean) {
    return html`<div class="prop ${strong ? "strong" : ""}"><span class="pl ${strong ? "" : "lk"}">${name}${strong ? nothing : icon("link", 14)}</span>
      <div class="vec">${["X", "Y", "Z"].map((a) => html`<label for=${name + a}>${a}</label><input class="field" id=${name + a} .value=${v}>`)}</div></div>`;
  }

  private compEnd() {
    return html`<div class="end"><button aria-label="Help">${icon("help", 12)}</button><button aria-label="Presets">${icon("preset", 13)}</button><button aria-label="More">${icon("kebab", 12)}</button></div>`;
  }

  private inspector() {
    return html`<section class="panel">
      <div class="tabs">${this.tab("Inspector", "info", true, true)}${this.tab("Package Manager", "pkg")}${this.tab("Project Settings", "gear")}${this.tab("Build Profiles", null)}${this.tabEnd()}</div>
      <div class="insp">
        <div class="head">
          <div class="cellL who">${icon("cubeVariant", 23)}${icon("down", 9, "menuArrow")}<input class="chk" type="checkbox" aria-label="Active" checked></div>
          <div class="nameRow"><input class="field" aria-label="Name" value="Hand Menu Setup MR Template Variant"><input class="chk" id="static" type="checkbox"><label class="static" for="static">Static</label>${icon("down", 9)}</div>
          <div class="cellL gap6"><label for="tag">Tag</label></div>
          <div class="tagRow">${this.select("tag", "Untagged")}<label for="layer">Layer</label>${this.select("layer", "Default")}</div>
          <div class="cellL gap14"><label for="prefab">Prefab</label></div>
          <div class="gap14">${this.object("prefab", { v: "HandMenuSetupVariant_MRTemplate", ic: "cubeVariant" })}</div>
          <div></div>
          <div class="ovRow">${this.select("overrides", "Overrides")}<button class="btn first">Select</button><button class="btn">Open</button></div>
        </div>
        <div class="compHead"><span class="fold">${icon("open", 12)}</span>${icon("transform", 14)}<span class="blank"></span><span class="ttl">Transform</span>${this.compEnd()}</div>
        <div class="tbody">${this.vec("Position", "0", true)}${this.vec("Rotation", "0", true)}${this.vec("Scale", "1", false)}</div>
        <div class="compHead"><span class="fold">${icon("open", 12)}</span>${icon("script", 14)}<input class="chk" type="checkbox" aria-label="Enabled" checked><span class="ttl">Hand Menu</span>${this.compEnd()}</div>
        <div class="props">${PROPS.map((p, i) => this.prop(p, i))}</div>
        <button class="btn addc">Add Component</button>
        <div class="labels"><h2>Asset Labels</h2></div>
      </div>
      <div class="mark m3"></div>
      <div class="ar a3"><span>3</span>${this.arrowShape(true)}</div>
    </section>`;
  }

  render() {
    return html`<div class="app">
      <header class="os">
        <div class="title">${icon("unity", 16)}<span class="name">com.unity.template.mixed-reality - SampleScene - Android - Unity 6 (6000.0.23f1)* &lt;DX11&gt;</span>
          <div class="wins"><button aria-label="Minimize">${icon("min", 16)}</button><button aria-label="Restore">${icon("restore", 16)}</button><button aria-label="Close">${icon("close", 16)}</button></div></div>
        <nav class="menu">${["File", "Edit", "Assets", "GameObject", "Component", "Services", "Jobs", "Tutorials", "Window", "Help"].map((m) => html`<a href="#menu">${m}</a>`)}</nav>
      </header>
      <div class="top">
        <div class="row">${icon("unity", 19)}<span class="brand">Unity 6</span><span class="sep"></span>
          <button class="account">${icon("person", 14)}DR${icon("down", 10, "drop")}</button>
          <button class="store">${icon("bag", 14)}Asset Store${icon("down", 10, "drop")}</button></div>
        <div class="plays"><button aria-label="Play">${icon("play", 14)}</button><button aria-label="Pause">${icon("pause", 14)}</button><button aria-label="Step">${icon("step", 14)}</button></div>
        <div class="row tools"><button aria-label="Cloud">${icon("cloud", 16)}</button><button aria-label="History">${icon("history", 14)}</button><button aria-label="Search">${icon("search", 14)}</button>
          <button class="lay">${icon("layout", 14)}Layout${icon("down", 10, "drop")}</button></div>
      </div>
      <main class="main">
        <div class="left"><div class="upper">${this.hierarchy()}${this.scene()}</div>${this.project()}</div>
        ${this.inspector()}
      </main>
      <footer class="status">${icon("bubble", 14)}<span>Multiple ADB server instances found, the following ADB server instance have been terminated due to being run from another SDK. Process paths:</span>
        <div class="end"><button class="st" aria-label="Debug mode">${icon("bugWarn", 14)}</button><button class="st" aria-label="Cache server">${icon("layersOff", 14)}</button><button class="st" aria-label="Activity">${icon("okCircle", 14)}</button></div></footer>
    </div>`;
  }
}
